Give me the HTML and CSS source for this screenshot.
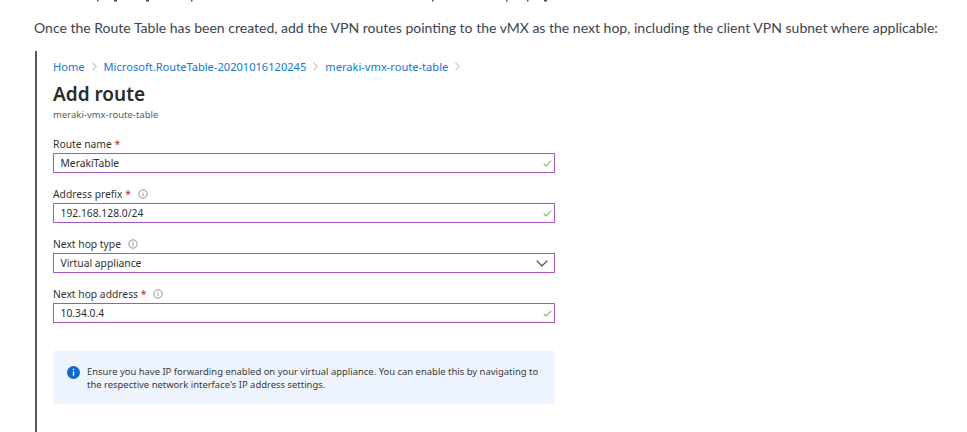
FILE: index.html
```html
<!DOCTYPE html>
<html lang="en">
<head>
<meta charset="utf-8">
<title>Add route</title>
<link rel="stylesheet" href="styles.css">
</head>
<body>
<svg class="cut-line" viewBox="0 0 967 2" aria-hidden="true"><path d="M97 0h1.500v1.500h-1.500zM114 0h3v1.500h-3zM146 0h3v1.500h-3zM191 0h1.500v1.500h-1.500zM432 0h1.500v1.500h-1.500zM506 0h1.500v1.500h-1.500zM527 0h1.500v1.500h-1.500zM544 0h3v1.500h-3z"/></svg>
<p class="intro">Once the Route Table has been created, add the VPN routes pointing to the vMX as the next hop, including the client VPN subnet where applicable:</p>
<div class="shot">
  <nav class="crumbs">
    <a>Home</a><svg class="sep" viewBox="0 0 6 10"><path d="M.5.5 5 5 .5 9.500"/></svg>
    <a>Microsoft.RouteTable-20201016120245</a><svg class="sep" viewBox="0 0 6 10"><path d="M.5.5 5 5 .5 9.500"/></svg>
    <a>meraki-vmx-route-table</a><svg class="sep" viewBox="0 0 6 10"><path d="M.5.5 5 5 .5 9.500"/></svg>
  </nav>
  <h1 class="title">Add route</h1>
  <div class="sub">meraki-vmx-route-table</div>

  <div class="field">
    <div class="label">Route name <span class="req">*</span></div>
    <div class="input"><span>MerakiTable</span><svg class="check" viewBox="0 0 11 9"><path d="M.7 4.800 3.600 7.600 10.300 1"/></svg></div>
  </div>
  <div class="field">
    <div class="label">Address prefix <span class="req">*</span><svg class="info" viewBox="0 0 12 12"><circle cx="6" cy="6" r="5"/><path d="M6 5.300v3.400M6 3.200v1"/></svg></div>
    <div class="input"><span>192.168.128.0/24</span><svg class="check" viewBox="0 0 11 9"><path d="M.7 4.800 3.600 7.600 10.300 1"/></svg></div>
  </div>
  <div class="field">
    <div class="label">Next hop type<svg class="info" viewBox="0 0 12 12"><circle cx="6" cy="6" r="5"/><path d="M6 5.300v3.400M6 3.200v1"/></svg></div>
    <div class="input select"><span>Virtual appliance</span><svg class="chev" viewBox="0 0 12 7"><path d="M.7.7 6 6 11.300.7"/></svg></div>
  </div>
  <div class="field">
    <div class="label">Next hop address <span class="req">*</span><svg class="info" viewBox="0 0 12 12"><circle cx="6" cy="6" r="5"/><path d="M6 5.300v3.400M6 3.200v1"/></svg></div>
    <div class="input"><span>10.34.0.4</span><svg class="check" viewBox="0 0 11 9"><path d="M.7 4.800 3.600 7.600 10.300 1"/></svg></div>
  </div>

  <div class="notice">
    <svg class="notice-icon" viewBox="0 0 14 14"><circle cx="7" cy="7" r="7"/><path d="M7 6v4.600M7 3v1.700"/></svg>
    <p>Ensure you have IP forwarding enabled on your virtual appliance. You can enable this by navigating to the respective network interface's IP address settings.</p>
  </div>
</div>
</body>
</html>
```
FILE: styles.css
```css
html, body { margin: 0; padding: 0; }
html { height: 432px; overflow: hidden; }
body {
  width: 967px;
  height: 432px;
  overflow: hidden;
  background: #fff;
  font-family: "Open Sans", "Noto Sans", sans-serif;
}
.cut-line {
  display: block;
  width: 967px;
  height: 2px;
  fill: #4a5058;
}
.intro {
  margin: 0;
  padding: 16px 0 0 34px;
  font-family: Lato, sans-serif;
  font-size: 14.03px;
  line-height: 20px;
  color: #3d4450;
  white-space: nowrap;
}
.shot {
  box-sizing: border-box;
  margin: 13px 0 0 35px;
  border-left: 2px solid #55585c;
  padding: 7px 0 0 16px;
  height: 381px;
  font-family: "Noto Sans", sans-serif;
}
.crumbs {
  display: flex;
  align-items: center;
  height: 16px;
  font-size: 11.1px;
  color: #0f78d4;
}
.sep {
  width: 5px;
  height: 9px;
  margin: 0 7px;
  fill: none;
  stroke: #8f8f8f;
  stroke-width: 1;
}
.title {
  margin: 7px 0 0;
  font-size: 19px;
  line-height: 27px;
  font-weight: 600;
  color: #2b2b2b;
}
.sub {
  margin: 0 0 14px;
  font-size: 9.5px;
  line-height: 13px;
  color: #5b5b5b;
}
.field { width: 502px; margin-bottom: 12px; }
.label {
  display: flex;
  align-items: center;
  height: 17px;
  font-size: 10.3px;
  color: #333;
  white-space: pre;
}
.req { color: #b3262b; }
.info {
  width: 10px;
  height: 10px;
  margin-left: 7px;
  fill: none;
  stroke: #6b6b6b;
  stroke-width: .9;
}
.input {
  display: flex;
  align-items: center;
  justify-content: space-between;
  box-sizing: border-box;
  height: 20px;
  margin-top: 1px;
  padding: 0 2px 0 6.5px;
  border: 1.5px solid #a557bd;
  font-size: 10.3px;
  color: #2e2e2e;
}
.check {
  width: 9px;
  height: 7px;
  fill: none;
  stroke: #7dc25f;
  stroke-width: 1.4;
}
.chev {
  width: 12px;
  height: 7px;
  margin-right: 4px;
  fill: none;
  stroke: #444;
  stroke-width: 1.2;
}
.notice {
  display: flex;
  gap: 7px;
  box-sizing: border-box;
  width: 502px;
  height: 53px;
  margin-top: 28px;
  padding: 14px 14px 0;
  background: #eef4fe;
}
.notice-icon { flex: none; width: 13px; height: 13px; margin-top: 1px; fill: #1268d3; stroke: #fff; stroke-width: 1.4; }
.notice-icon circle { stroke: none; }
.notice p {
  margin: 0;
  font-size: 9.45px;
  line-height: 13px;
  color: #3a3a3a;
}
```
